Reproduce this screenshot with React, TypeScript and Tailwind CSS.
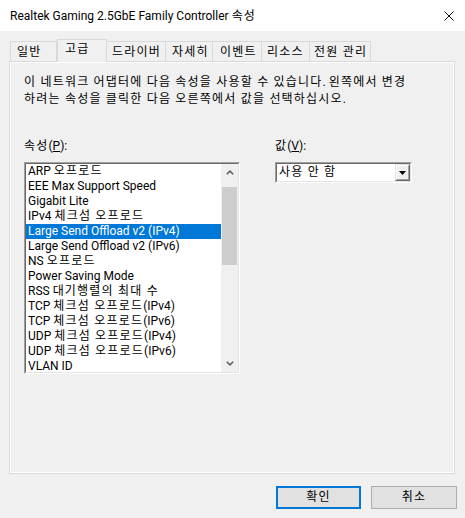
import React from "react";

const items = [
  "ARP 오프로드",
  "EEE Max Support Speed",
  "Gigabit Lite",
  "IPv4 체크섬 오프로드",
  "Large Send Offload v2 (IPv4)",
  "Large Send Offload v2 (IPv6)",
  "NS 오프로드",
  "Power Saving Mode",
  "RSS 대기행렬의 최대 수",
  "TCP 체크섬 오프로드(IPv4)",
  "TCP 체크섬 오프로드(IPv6)",
  "UDP 체크섬 오프로드(IPv4)",
  "UDP 체크섬 오프로드(IPv6)",
  "VLAN ID",
];

const tabs = [
  { label: "일반", w: "w-[47px]", pl: "pl-[6px]" },
  { label: "고급", w: "w-[50px]", pl: "pl-[7px]", active: true },
  { label: "드라이버", w: "w-[59px]", pl: "pl-[5px]" },
  { label: "자세히", w: "w-[47px]", pl: "pl-[6px]" },
  { label: "이벤트", w: "w-[49px]", pl: "pl-[7px]" },
  { label: "리소스", w: "w-[48px]", pl: "pl-[5px]" },
  { label: "전원 관리", w: "w-[61px]", pl: "pl-[4px]" },
];

function K({ s }: { s: string }) {
  const parts = s.split(/([\uAC00-\uD7A3]+(?: [\uAC00-\uD7A3]+)*)/);
  return (
    <>
      {parts.map((p, i) =>
        /[\uAC00-\uD7A3]/.test(p) ? (
          <span key={i} className="tracking-[1.2px]">
            {p}
          </span>
        ) : (
          <React.Fragment key={i}>{p}</React.Fragment>
        )
      )}
    </>
  );
}

export default function App() {
  return (
    <div className="w-[465px] h-[518px] bg-[#f0f0f0] flex flex-col overflow-hidden text-black text-[12px] font-['Roboto','Noto_Sans_CJK_KR',sans-serif]">
      {/* Title bar */}
      <div className="h-[31px] bg-white flex items-center justify-between pl-[10px] pr-[11px] shrink-0">
        <span className="text-[12px] leading-[16px]">
          <K s="Realtek Gaming 2.5GbE Family Controller 속성" />
        </span>
        <svg width="10" height="10" viewBox="0 0 10 10" className="block">
          <path d="M0.5 0.5 L9.5 9.5 M9.5 0.5 L0.5 9.5" stroke="#111" strokeWidth="1" fill="none" />
        </svg>
      </div>

      {/* Tabs */}
      <div className="flex items-end h-[22px] mt-[8px] pl-[10px] shrink-0 relative z-10">
        {tabs.map((t) =>
          t.active ? (
            <div
              key={t.label}
              className={`${t.w} ${t.pl} h-[23px] mb-[-1px] bg-[#f0f0f0] border border-b-0 border-[#d9d9d9] leading-[19px] whitespace-nowrap`}
            >
              <K s={t.label} />
            </div>
          ) : (
            <div
              key={t.label}
              className={`${t.w} ${t.pl} h-[20px] bg-[#f0f0f0] border border-b-0 border-l-0 first:border-l border-[#d9d9d9] leading-[20px] whitespace-nowrap`}
            >
              <K s={t.label} />
            </div>
          )
        )}
      </div>

      {/* Panel */}
      <div className="ml-[9px] w-[446px] h-[413px] border border-[#d9d9d9] shadow-[inset_1px_1px_0_#ffffff,inset_-1px_-1px_0_#ffffff] shrink-0 pl-[14px] pt-[12px]">
        <p className="leading-[17px] whitespace-nowrap">
          <K s="이 네트워크 어댑터에 다음 속성을 사용할 수 있습니다. 왼쪽에서 변경" />
          <br />
          <K s="하려는 속성을 클릭한 다음 오른쪽에서 값을 선택하십시오." />
        </p>

        <div className="flex mt-[30px]">
          {/* Left column */}
          <div className="w-[216px]">
            <div className="h-[17px] leading-[17px]">
              <K s="속성" />(<span className="underline">P</span>):
            </div>
            <div className="mt-[7px] h-[212px] border border-t-[#a0a0a0] border-l-[#a0a0a0] border-r-white border-b-white">
              <div className="h-full border border-t-[#696969] border-l-[#696969] border-r-[#e3e3e3] border-b-[#e3e3e3] bg-white flex overflow-hidden">
                <div className="flex-1 overflow-hidden">
                  {items.map((it, i) => (
                    <div
                      key={it}
                      className={`h-[15px] leading-[15px] pl-[2px] whitespace-nowrap ${
                        i === 4 ? "bg-[#0078d7] text-white" : ""
                      }`}
                    >
                      <K s={it} />
                    </div>
                  ))}
                </div>
                <div className="w-[17px] bg-[#f0f0f0] flex flex-col shrink-0">
                  <div className="h-[17px] flex items-center justify-center">
                    <svg width="8" height="5" viewBox="0 0 8 5">
                      <path d="M0.8 4.3 L4 1.1 L7.2 4.3" stroke="#606060" strokeWidth="1.6" fill="none" />
                    </svg>
                  </div>
                  <div className="flex-1 px-[1px] pt-[6px]">
                    <div className="h-[78px] bg-[#cdcdcd]" />
                  </div>
                  <div className="h-[17px] flex items-center justify-center">
                    <svg width="8" height="5" viewBox="0 0 8 5">
                      <path d="M0.8 0.7 L4 3.9 L7.2 0.7" stroke="#606060" strokeWidth="1.6" fill="none" />
                    </svg>
                  </div>
                </div>
              </div>
            </div>
          </div>

          {/* Right column */}
          <div className="ml-[35px]">
            <div className="h-[17px] leading-[17px] whitespace-nowrap">
              <K s="값" />(<span className="underline">V</span>):
            </div>
            <div className="mt-[7px] w-[137px] h-[21px] border border-t-[#a0a0a0] border-l-[#a0a0a0] border-r-white border-b-white">
              <div className="h-full border border-t-[#696969] border-l-[#696969] border-r-[#e3e3e3] border-b-[#e3e3e3] bg-white flex items-center">
                <span className="flex-1 pl-[2px] leading-[17px] whitespace-nowrap">
                  <K s="사용 안 함" />
                </span>
                <div className="w-[15px] h-full border border-t-[#e3e3e3] border-l-[#e3e3e3] border-r-[#696969] border-b-[#696969]">
                  <div className="h-full border border-t-white border-l-white border-r-[#a0a0a0] border-b-[#a0a0a0] bg-[#f0f0f0] flex items-center justify-center">
                    <svg width="7" height="4" viewBox="0 0 7 4">
                      <path d="M0 0 L7 0 L3.5 4 Z" fill="#000" />
                    </svg>
                  </div>
                </div>
              </div>
            </div>
          </div>
        </div>
      </div>

      {/* Buttons */}
      <div className="flex justify-end gap-[10px] mt-[12px] pr-[8px] shrink-0">
        <button className="w-[85px] h-[23px] border-2 border-[#0078d7] bg-[#e1e1e1] leading-[19px] text-[12px]">
          <K s="확인" />
        </button>
        <button className="w-[86px] h-[23px] border border-[#adadad] bg-[#e1e1e1] leading-[21px] text-[12px]">
          <K s="취소" />
        </button>
      </div>
    </div>
  );
}
